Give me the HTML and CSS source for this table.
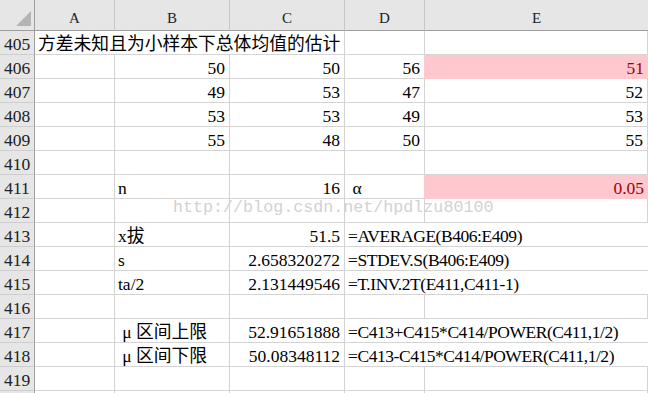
FILE: index.html
```html
<!DOCTYPE html>
<html lang="zh-CN">
<head>
<meta charset="utf-8">
<title>Sheet</title>
<link rel="stylesheet" href="styles.css">
</head>
<body>
<div class="sheet">
  <div class="corner"><svg width="34" height="30" viewBox="0 0 34 30"><polygon points="16,26 31,11 31,26" fill="#b4b4b4"/></svg></div>
  <div class="ch">A</div><div class="ch">B</div><div class="ch">C</div><div class="ch">D</div><div class="ch last">E</div>

  <div class="rh">405</div><div class="c span3"><span class="cjk">方差未知且为小样本下总体均值的估计</span></div><div class="c"></div><div class="c"></div>
  <div class="rh">406</div><div class="c"></div><div class="c n">50</div><div class="c n">50</div><div class="c n">56</div><div class="c n bad">51</div>
  <div class="rh">407</div><div class="c"></div><div class="c n">49</div><div class="c n">53</div><div class="c n">47</div><div class="c n">52</div>
  <div class="rh">408</div><div class="c"></div><div class="c n">53</div><div class="c n">53</div><div class="c n">49</div><div class="c n">53</div>
  <div class="rh">409</div><div class="c"></div><div class="c n">55</div><div class="c n">48</div><div class="c n">50</div><div class="c n">55</div>
  <div class="rh">410</div><div class="c"></div><div class="c"></div><div class="c"></div><div class="c"></div><div class="c"></div>
  <div class="rh">411</div><div class="c"></div><div class="c">n</div><div class="c n">16</div><div class="c"><span class="fw">α</span></div><div class="c n bad">0.05</div>
  <div class="rh">412</div><div class="c"></div><div class="c"></div><div class="c"></div><div class="c"></div><div class="c"></div>
  <div class="rh">413</div><div class="c"></div><div class="c">x<span class="cjk">拔</span></div><div class="c n">51.5</div><div class="c span2 f">=AVERAGE(B406:E409)</div>
  <div class="rh">414</div><div class="c"></div><div class="c">s</div><div class="c n">2.658320272</div><div class="c span2 f">=STDEV.S(B406:E409)</div>
  <div class="rh">415</div><div class="c"></div><div class="c">ta/2</div><div class="c n">2.131449546</div><div class="c span2 f">=T.INV.2T(E411,C411-1)</div>
  <div class="rh">416</div><div class="c"></div><div class="c"></div><div class="c"></div><div class="c"></div><div class="c"></div>
  <div class="rh">417</div><div class="c"></div><div class="c"><span class="fw">μ</span><span class="cjk">区间上限</span></div><div class="c n">52.91651888</div><div class="c span2 f">=C413+C415*C414/POWER(C411,1/2)</div>
  <div class="rh">418</div><div class="c"></div><div class="c"><span class="fw">μ</span><span class="cjk">区间下限</span></div><div class="c n">50.08348112</div><div class="c span2 f">=C413-C415*C414/POWER(C411,1/2)</div>
  <div class="rh">419</div><div class="c"></div><div class="c"></div><div class="c"></div><div class="c"></div><div class="c"></div>
  <div class="rh"></div><div class="c"></div><div class="c"></div><div class="c"></div><div class="c"></div><div class="c"></div>

  <div class="watermark">http://blog.csdn.net/hpdlzu80100</div>
</div>
</body>
</html>
```
FILE: styles.css
```css
html, body {
  margin: 0;
  padding: 0;
  background: #fff;
  overflow: hidden;
}
body {
  font-family: "Liberation Serif", "Noto Sans CJK SC", serif;
  font-size: 17.5px;
  letter-spacing: 0;
  color: #000;
}
.sheet {
  position: relative;
  display: grid;
  grid-template-columns: 35px 80px 115px 115px 80px 223px;
  grid-template-rows: 31px;
  grid-auto-rows: 24px;
  width: 648px;
}
.corner {
  background: #e6e6e6;
  border-right: 1px solid #9e9e9e;
  border-bottom: 1px solid #9e9e9e;
  box-sizing: border-box;
}
.corner svg { display: block; }
.ch {
  box-sizing: border-box;
  background: #e6e6e6;
  border-right: 1px solid #c8c8c8;
  border-bottom: 1px solid #9e9e9e;
  text-align: center;
  font-size: 15px;
  line-height: 18px;
  padding-top: 9px;
  color: #222;
}
.ch.last { border-right: none; }
.rh {
  box-sizing: border-box;
  background: #e6e6e6;
  border-right: 1px solid #9e9e9e;
  border-bottom: 1px solid #cfcfcf;
  text-align: center;
  padding-top: 3px;
  line-height: 20px;
  color: #222;
}
.c {
  box-sizing: border-box;
  border-right: 1px solid #d4d4d4;
  border-bottom: 1px solid #d4d4d4;
  padding: 3px 3px 0 3px;
  line-height: 20px;
  white-space: nowrap;
  overflow: visible;
}
.n { text-align: right; padding-right: 4px; }
.f { letter-spacing: -0.45px; }
.span3 { grid-column: span 3; }
.span2 { grid-column: span 2; border-right: none; }
.bad {
  background: #ffc7ce;
  color: #9c0006;
  border-bottom-color: #ffc7ce;
  border-right: none;
  box-shadow: -1px 0 0 #ffc7ce;
}
.cjk {
  font-size: 17.8px;
  letter-spacing: 0;
  line-height: 20px;
}
.fw {
  display: inline-block;
  width: 18px;
  text-align: center;
}
.watermark {
  position: absolute;
  left: 173px;
  top: 198px;
  font-family: "Liberation Mono", monospace;
  font-size: 16.7px;
  color: #d2d2d2;
  white-space: nowrap;
  pointer-events: none;
}
```
